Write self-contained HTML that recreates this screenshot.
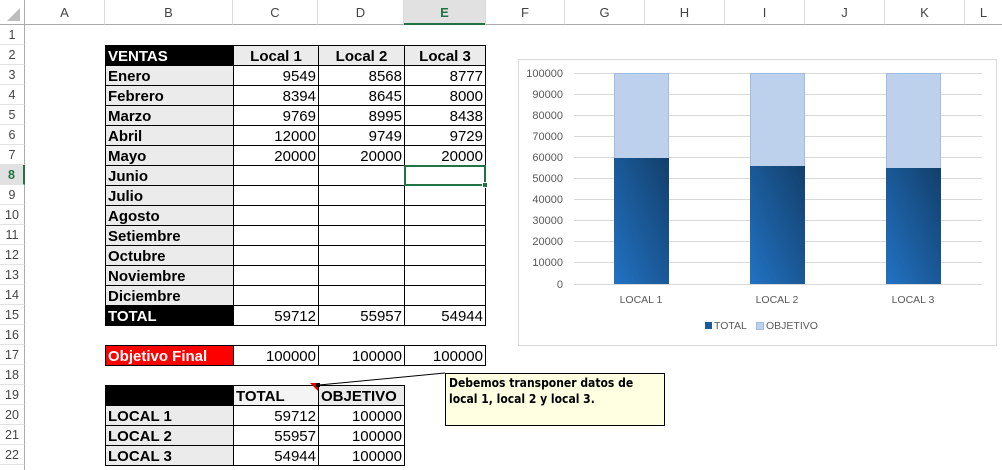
<!DOCTYPE html>
<html><head><meta charset="utf-8"><style>
*{margin:0;padding:0;box-sizing:border-box}
html,body{width:1002px;height:470px;overflow:hidden}
body{background:#fff;font-family:"Liberation Sans",Arial,sans-serif;position:relative}
.hdr{position:absolute;top:0;height:25px;background:#fff;border-bottom:1px solid #ababab;font-size:13px;color:#444;line-height:25px;text-align:center}
.rn{position:absolute;left:0;width:25px;height:20px;line-height:21px;font-size:12.5px;color:#444;text-align:center;background:#fff;border-right:1px solid #ababab;border-bottom:1px solid #e2e2e2}
.c{position:absolute;height:21px;border:1px solid #000;font-size:15px;font-weight:bold;line-height:21px;padding:0 2px;white-space:nowrap;overflow:hidden}
.g{background:#ebebeb}
.k{background:#000;color:#fff}
.r{text-align:right;font-weight:normal}
.ctr{text-align:center}
</style></head><body>
<!-- headers -->
<div class="hdr" style="left:0;width:25px;border-right:1px solid #ababab"><svg width="25" height="25"><polygon points="20,8 20,21 7,21" fill="#bdbdbd"/></svg></div>
<div class="hdr" style="left:25px;width:80px;border-right:1px solid #dadada">A</div>
<div class="hdr" style="left:105px;width:128px;border-right:1px solid #dadada">B</div>
<div class="hdr" style="left:233px;width:85px;border-right:1px solid #dadada">C</div>
<div class="hdr" style="left:318px;width:86px;border-right:1px solid #dadada">D</div>
<div class="hdr" style="left:404px;width:81px;background:#e1e1e1;border-bottom:2px solid #217346;color:#217346;font-weight:bold">E</div>
<div class="hdr" style="left:485px;width:80px;border-right:1px solid #dadada;border-left:1px solid #dadada">F</div>
<div class="hdr" style="left:565px;width:80px;border-right:1px solid #dadada">G</div>
<div class="hdr" style="left:645px;width:80px;border-right:1px solid #dadada">H</div>
<div class="hdr" style="left:725px;width:80px;border-right:1px solid #dadada">I</div>
<div class="hdr" style="left:805px;width:80px;border-right:1px solid #dadada">J</div>
<div class="hdr" style="left:885px;width:80px;border-right:1px solid #dadada">K</div>
<div class="hdr" style="left:965px;width:37px">L</div>
<!-- row numbers -->
<div class="rn" style="top:25px">1</div><div class="rn" style="top:45px">2</div><div class="rn" style="top:65px">3</div><div class="rn" style="top:85px">4</div><div class="rn" style="top:105px">5</div><div class="rn" style="top:125px">6</div><div class="rn" style="top:145px">7</div><div class="rn" style="top:165px;background:#e1e1e1;color:#217346;font-weight:bold;border-right:2px solid #217346">8</div><div class="rn" style="top:185px">9</div><div class="rn" style="top:205px">10</div><div class="rn" style="top:225px">11</div><div class="rn" style="top:245px">12</div><div class="rn" style="top:265px">13</div><div class="rn" style="top:285px">14</div><div class="rn" style="top:305px">15</div><div class="rn" style="top:325px">16</div><div class="rn" style="top:345px">17</div><div class="rn" style="top:365px">18</div><div class="rn" style="top:385px">19</div><div class="rn" style="top:405px">20</div><div class="rn" style="top:425px">21</div><div class="rn" style="top:445px">22</div>
<div class="rn" style="top:465px"></div>

<!-- main table -->
<div class="c k" style="left:105px;top:45px;width:129px">VENTAS</div>
<div class="c g ctr" style="left:233px;top:45px;width:86px">Local 1</div>
<div class="c g ctr" style="left:318px;top:45px;width:87px">Local 2</div>
<div class="c g ctr" style="left:404px;top:45px;width:82px">Local 3</div>

<div class="c g" style="left:105px;top:65px;width:129px">Enero</div><div class="c r" style="left:233px;top:65px;width:86px">9549</div><div class="c r" style="left:318px;top:65px;width:87px">8568</div><div class="c r" style="left:404px;top:65px;width:82px">8777</div>
<div class="c g" style="left:105px;top:85px;width:129px">Febrero</div><div class="c r" style="left:233px;top:85px;width:86px">8394</div><div class="c r" style="left:318px;top:85px;width:87px">8645</div><div class="c r" style="left:404px;top:85px;width:82px">8000</div>
<div class="c g" style="left:105px;top:105px;width:129px">Marzo</div><div class="c r" style="left:233px;top:105px;width:86px">9769</div><div class="c r" style="left:318px;top:105px;width:87px">8995</div><div class="c r" style="left:404px;top:105px;width:82px">8438</div>
<div class="c g" style="left:105px;top:125px;width:129px">Abril</div><div class="c r" style="left:233px;top:125px;width:86px">12000</div><div class="c r" style="left:318px;top:125px;width:87px">9749</div><div class="c r" style="left:404px;top:125px;width:82px">9729</div>
<div class="c g" style="left:105px;top:145px;width:129px">Mayo</div><div class="c r" style="left:233px;top:145px;width:86px">20000</div><div class="c r" style="left:318px;top:145px;width:87px">20000</div><div class="c r" style="left:404px;top:145px;width:82px">20000</div>
<div class="c g" style="left:105px;top:165px;width:129px">Junio</div><div class="c" style="left:233px;top:165px;width:86px"></div><div class="c" style="left:318px;top:165px;width:87px"></div><div class="c" style="left:404px;top:165px;width:82px"></div>
<div class="c g" style="left:105px;top:185px;width:129px">Julio</div><div class="c" style="left:233px;top:185px;width:86px"></div><div class="c" style="left:318px;top:185px;width:87px"></div><div class="c" style="left:404px;top:185px;width:82px"></div>
<div class="c g" style="left:105px;top:205px;width:129px">Agosto</div><div class="c" style="left:233px;top:205px;width:86px"></div><div class="c" style="left:318px;top:205px;width:87px"></div><div class="c" style="left:404px;top:205px;width:82px"></div>
<div class="c g" style="left:105px;top:225px;width:129px">Setiembre</div><div class="c" style="left:233px;top:225px;width:86px"></div><div class="c" style="left:318px;top:225px;width:87px"></div><div class="c" style="left:404px;top:225px;width:82px"></div>
<div class="c g" style="left:105px;top:245px;width:129px">Octubre</div><div class="c" style="left:233px;top:245px;width:86px"></div><div class="c" style="left:318px;top:245px;width:87px"></div><div class="c" style="left:404px;top:245px;width:82px"></div>
<div class="c g" style="left:105px;top:265px;width:129px">Noviembre</div><div class="c" style="left:233px;top:265px;width:86px"></div><div class="c" style="left:318px;top:265px;width:87px"></div><div class="c" style="left:404px;top:265px;width:82px"></div>
<div class="c g" style="left:105px;top:285px;width:129px">Diciembre</div><div class="c" style="left:233px;top:285px;width:86px"></div><div class="c" style="left:318px;top:285px;width:87px"></div><div class="c" style="left:404px;top:285px;width:82px"></div>
<div class="c k" style="left:105px;top:305px;width:129px">TOTAL</div><div class="c r" style="left:233px;top:305px;width:86px">59712</div><div class="c r" style="left:318px;top:305px;width:87px">55957</div><div class="c r" style="left:404px;top:305px;width:82px">54944</div>
<!-- selection -->
<div style="position:absolute;left:404px;top:165px;width:82px;height:21px;border:2px solid #217346"></div>
<div style="position:absolute;left:482px;top:182px;width:6px;height:6px;background:#217346;border:1px solid #fff"></div>

<!-- objetivo -->
<div class="c" style="left:105px;top:345px;width:129px;background:#ff0000;color:#fff">Objetivo Final</div><div class="c r" style="left:233px;top:345px;width:86px">100000</div><div class="c r" style="left:318px;top:345px;width:87px">100000</div><div class="c r" style="left:404px;top:345px;width:82px">100000</div>

<!-- bottom table -->
<div class="c k" style="left:105px;top:385px;width:129px"></div>
<div class="c" style="left:233px;top:385px;width:86px;background:#f4f4f4">TOTAL</div>
<div class="c g" style="left:318px;top:385px;width:87px">OBJETIVO</div>
<div class="c g" style="left:105px;top:405px;width:129px">LOCAL 1</div><div class="c r" style="left:233px;top:405px;width:86px">59712</div><div class="c r" style="left:318px;top:405px;width:87px">100000</div>
<div class="c g" style="left:105px;top:425px;width:129px">LOCAL 2</div><div class="c r" style="left:233px;top:425px;width:86px">55957</div><div class="c r" style="left:318px;top:425px;width:87px">100000</div>
<div class="c g" style="left:105px;top:445px;width:129px">LOCAL 3</div><div class="c r" style="left:233px;top:445px;width:86px">54944</div><div class="c r" style="left:318px;top:445px;width:87px">100000</div>

<!-- comment -->
<svg style="position:absolute;left:0;top:0" width="1002" height="470">
<polygon points="310,383 318,383 318,391" fill="#e00000"/>
<line x1="319" y1="385" x2="445" y2="373" stroke="#000" stroke-width="1"/>
<rect x="316" y="383" width="4" height="4" fill="#000"/>
</svg>
<div style="position:absolute;left:445px;top:373px;width:220px;height:53px;background:#ffffe1;border:1px solid #000;font-family:'DejaVu Sans Condensed','DejaVu Sans',sans-serif;font-stretch:condensed;font-weight:bold;font-size:12px;line-height:16px;padding:1px 3px;color:#000">Debemos transponer datos de local 1, local 2 y local 3.</div>

<!-- chart -->
<svg style="position:absolute;left:518px;top:59px" width="479" height="287" viewBox="518 59 479 287">
<defs><linearGradient id="bg" x1="0" y1="1" x2="1" y2="0"><stop offset="0" stop-color="#2272c3"/><stop offset="1" stop-color="#123f6b"/></linearGradient></defs>
<rect x="518.5" y="59.5" width="478" height="286" fill="#fff" stroke="#d9d9d9"/>
<g stroke="#d9d9d9" stroke-width="1">
<line x1="574" x2="982" y1="73.5" y2="73.5"/><line x1="574" x2="982" y1="94.5" y2="94.5"/><line x1="574" x2="982" y1="115.5" y2="115.5"/><line x1="574" x2="982" y1="136.5" y2="136.5"/><line x1="574" x2="982" y1="157.5" y2="157.5"/><line x1="574" x2="982" y1="178.5" y2="178.5"/><line x1="574" x2="982" y1="199.5" y2="199.5"/><line x1="574" x2="982" y1="220.5" y2="220.5"/><line x1="574" x2="982" y1="241.5" y2="241.5"/><line x1="574" x2="982" y1="262.5" y2="262.5"/><line x1="574" x2="982" y1="284.5" y2="284.5"/>
</g>
<g font-family="Liberation Sans,sans-serif" font-size="11" fill="#595959" text-anchor="end">
<text x="563" y="77">100000</text><text x="563" y="98">90000</text><text x="563" y="119">80000</text><text x="563" y="140">70000</text><text x="563" y="161">60000</text><text x="563" y="182">50000</text><text x="563" y="203">40000</text><text x="563" y="224">30000</text><text x="563" y="245">20000</text><text x="563" y="266">10000</text><text x="563" y="288">0</text>
</g>
<g fill="#bdd1ec" stroke="#9fbde3"><rect x="614.5" y="73.5" width="54" height="85"/><rect x="750.5" y="73.5" width="54" height="93"/><rect x="886.5" y="73.5" width="54" height="95"/></g>
<rect x="614" y="158" width="55" height="126" fill="url(#bg)"/>
<rect x="750" y="166" width="55" height="118" fill="url(#bg)"/>
<rect x="886" y="168" width="55" height="116" fill="url(#bg)"/>
<g font-family="Liberation Sans,sans-serif" font-size="10.5" fill="#595959" text-anchor="middle">
<text x="641" y="303">LOCAL 1</text><text x="777" y="303">LOCAL 2</text><text x="913" y="303">LOCAL 3</text>
</g>
<rect x="705" y="322" width="7" height="7" fill="#1c5a99"/>
<rect x="756.5" y="322.5" width="7" height="7" fill="#bdd1ec" stroke="#9fbde3"/>
<g font-family="Liberation Sans,sans-serif" font-size="10.5" fill="#595959"><text x="714" y="329">TOTAL</text><text x="766" y="329">OBJETIVO</text></g>
</svg>
</body></html>
